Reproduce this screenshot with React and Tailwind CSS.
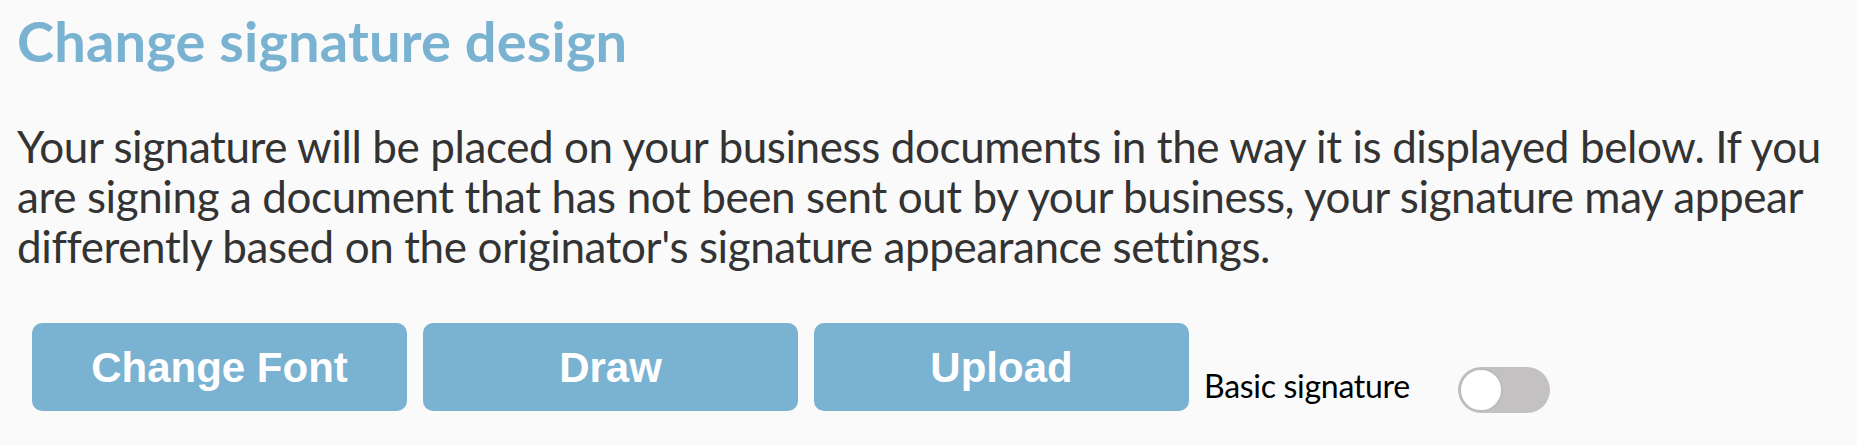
import React, { useState } from "react";

const buttons = ["Change Font", "Draw", "Upload"];

const App = () => {
  const [basic, setBasic] = useState(false);

  return (
    <div className="min-h-[445px] w-full bg-[#fafafa] px-[17px] pt-[7px] font-['Lato',sans-serif]">
      <h1 className="text-[56px] font-bold leading-[1.2] tracking-[0.15px] text-[#7ab2d2]">Change signature design</h1>

      <p className="mt-[47px] text-[44px] leading-[50px] tracking-[-0.4px] text-[#333333]">
        Your signature will be placed on your business documents in the way it is displayed below. If you
        are signing a document that has not been sent out by your business, your signature may appear
        differently based on the originator's signature appearance settings.
      </p>

      <div className="mt-[52px] flex items-start pl-[15px]">
        <div className="flex gap-4">
          {buttons.map((label) => (
            <button
              key={label}
              className="h-[88px] w-[375px] rounded-[10px] bg-[#7ab2d2] font-['Liberation_Sans',Arial,sans-serif] text-[42px] font-bold text-white"
            >
              {label}
            </button>
          ))}
        </div>

        <div className="ml-[15px] mt-[44px] flex items-start">
          <span className="text-[32px] leading-[38px] tracking-[-0.3px] text-black">Basic signature</span>
          <button
            onClick={() => setBasic(!basic)}
            className={`ml-[48px] flex h-[46px] w-[92px] items-center rounded-full px-px ${basic ? "bg-[#7ab2d2]" : "bg-[#c3c1c1]"}`}
          >
            <span
              className={`h-[44px] w-[44px] rounded-full border-2 border-[#bdbbbb] bg-white ${basic ? "translate-x-[46px]" : ""}`}
            />
          </button>
        </div>
      </div>
    </div>
  );
};

export default App;
